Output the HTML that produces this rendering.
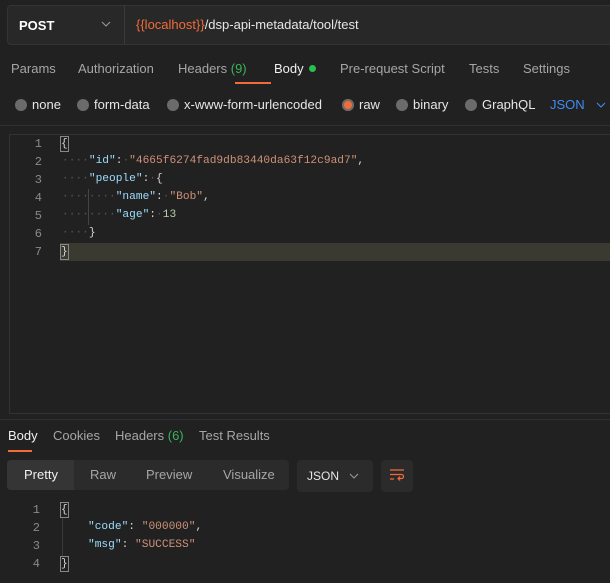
<!DOCTYPE html>
<html><head><meta charset="utf-8"><style>
*{margin:0;padding:0;box-sizing:border-box}
body{width:610px;height:583px;background:#212121;font-family:"Liberation Sans",sans-serif;position:relative;overflow:hidden;color:#a6a6a6;font-size:13px}
.a{position:absolute;white-space:nowrap}
.mono{font-family:"Liberation Mono",monospace;font-size:11.2px}
.k{color:#9cdcfe}.s{color:#ce9178}.n{color:#b5cea8}.p{color:#d4d4d4}.d{color:#555}
.ln{color:#8a8a8a;width:20px;text-align:right;font-size:12px}
.rad{width:12px;height:12px;border-radius:50%;background:#6b6b6b;display:inline-block;vertical-align:-2px;margin-right:5px}
</style></head><body>
<div class="a" style="left:7px;top:5px;width:610px;height:40px;background:#282828;border:1px solid #343434;border-radius:4px"></div>
<div class="a" style="left:124px;top:6px;width:1px;height:38px;background:#3a3a3a"></div>
<div class="a" style="left:19px;top:18px;color:#fff;font-weight:bold;font-size:13px">POST</div>
<svg class="a" style="left:101px;top:21px" width="10" height="6" viewBox="0 0 10 6" fill="none" stroke="#999" stroke-width="1.1"><path d="M1 1L5 5L9 1"/></svg>
<div class="a" style="left:136px;top:17px;color:#e6e6e6;font-size:13px"><span style="color:#f26b3a">{{localhost}}</span>/dsp-api-metadata/tool/test</div>

<div class="a" style="left:11px;top:61px">Params</div>
<div class="a" style="left:78px;top:61px">Authorization</div>
<div class="a" style="left:178px;top:61px">Headers <span style="color:#3bb35c">(9)</span></div>
<div class="a" style="left:274px;top:61px;color:#f0f0f0">Body <span style="display:inline-block;width:7px;height:7px;border-radius:50%;background:#27c24c;margin-left:2px;vertical-align:1px"></span></div>
<div class="a" style="left:235px;top:82px;width:36px;height:2px;background:#f26b3a"></div>
<div class="a" style="left:340px;top:61px">Pre-request Script</div>
<div class="a" style="left:469px;top:61px">Tests</div>
<div class="a" style="left:523px;top:61px">Settings</div>

<div class="a" style="left:15px;top:97px;color:#e6e6e6"><span class="rad"></span>none</div>
<div class="a" style="left:77px;top:97px;color:#e6e6e6"><span class="rad"></span>form-data</div>
<div class="a" style="left:167px;top:97px;color:#e6e6e6"><span class="rad"></span>x-www-form-urlencoded</div>
<div class="a" style="left:342px;top:97px;color:#e6e6e6"><span class="rad" style="background:#f26b3a;box-shadow:inset 0 0 0 2px #6b6b6b"></span>raw</div>
<div class="a" style="left:396px;top:97px;color:#e6e6e6"><span class="rad"></span>binary</div>
<div class="a" style="left:465px;top:97px;color:#e6e6e6"><span class="rad"></span>GraphQL</div>
<div class="a" style="left:550px;top:97px;color:#3f8cf5">JSON</div>
<svg class="a" style="left:596px;top:102px" width="10" height="6" viewBox="0 0 10 6" fill="none" stroke="#3f8cf5" stroke-width="1.1"><path d="M1 1L5 5L9 1"/></svg>

<div class="a" style="left:0;top:125px;width:610px;height:1px;background:#303030"></div>
<div class="a" style="left:9px;top:134px;width:610px;height:280px;border-left:1px solid #333;border-top:1px solid #333;border-bottom:1px solid #333"></div>
<div class="a" style="left:0;top:419px;width:610px;height:1px;background:#303030"></div>

<div class="a" style="left:60px;top:243px;width:550px;height:18px;background:#3a3a30"></div>
<div class="a" style="left:88px;top:189px;width:1px;height:36px;background:#444"></div>
<div class="mono">
<div class="a ln" style="left:22px;top:137px">1</div>
<div class="a ln" style="left:22px;top:155px">2</div>
<div class="a ln" style="left:22px;top:173px">3</div>
<div class="a ln" style="left:22px;top:191px">4</div>
<div class="a ln" style="left:22px;top:209px">5</div>
<div class="a ln" style="left:22px;top:227px">6</div>
<div class="a ln" style="left:22px;top:245px">7</div>
<div class="a p" style="left:61px;top:137px;outline:1px solid #888;line-height:14px">{</div>
<div class="a" style="left:62px;top:155px"><span class="d">····</span><span class="k">"id"</span><span class="p">:</span><span class="d">·</span><span class="s">"4665f6274fad9db83440da63f12c9ad7"</span><span class="p">,</span></div>
<div class="a" style="left:62px;top:173px"><span class="d">····</span><span class="k">"people"</span><span class="p">:</span><span class="d">·</span><span class="p">{</span></div>
<div class="a" style="left:62px;top:191px"><span class="d">········</span><span class="k">"name"</span><span class="p">:</span><span class="d">·</span><span class="s">"Bob"</span><span class="p">,</span></div>
<div class="a" style="left:62px;top:209px"><span class="d">········</span><span class="k">"age"</span><span class="p">:</span><span class="d">·</span><span class="n">13</span></div>
<div class="a" style="left:62px;top:227px"><span class="d">····</span><span class="p">}</span></div>
<div class="a p" style="left:61px;top:245px;outline:1px solid #888;line-height:14px">}</div>
</div>

<div class="a" style="left:8px;top:428px;color:#f0f0f0">Body</div>
<div class="a" style="left:8px;top:450px;width:24px;height:2px;background:#f26b3a"></div>
<div class="a" style="left:53px;top:428px">Cookies</div>
<div class="a" style="left:115px;top:428px">Headers <span style="color:#3bb35c">(6)</span></div>
<div class="a" style="left:199px;top:428px">Test Results</div>

<div class="a" style="left:7px;top:460px;width:282px;height:30px;background:#2b2b2b;border-radius:4px"></div>
<div class="a" style="left:7px;top:460px;width:67px;height:30px;background:#353535;border-radius:4px 0 0 4px"></div>
<div class="a" style="left:24px;top:467px;color:#f0f0f0">Pretty</div>
<div class="a" style="left:90px;top:467px">Raw</div>
<div class="a" style="left:146px;top:467px">Preview</div>
<div class="a" style="left:223px;top:467px">Visualize</div>
<div class="a" style="left:297px;top:460px;width:76px;height:32px;background:#2b2b2b;border-radius:4px"></div>
<div class="a" style="left:307px;top:469px;color:#e6e6e6;font-size:12px">JSON</div>
<svg class="a" style="left:349px;top:473px" width="10" height="6" viewBox="0 0 10 6" fill="none" stroke="#999" stroke-width="1.1"><path d="M1 1L5 5L9 1"/></svg>
<div class="a" style="left:381px;top:460px;width:32px;height:32px;background:#2b2b2b;border-radius:4px"></div>
<svg class="a" style="left:389px;top:467px" width="16" height="16" viewBox="0 0 16 16" fill="none" stroke="#f26b3a" stroke-width="1.2"><path d="M1 3H15M1 7.5H12.5a2 2 0 0 1 0 4H9M11 9.5L9 11.5L11 13.5M1 12H5"/></svg>

<div class="a" style="left:62px;top:511px;width:1px;height:54px;background:#3a3a3a"></div>
<div class="mono">
<div class="a ln" style="left:20px;top:503px">1</div>
<div class="a ln" style="left:20px;top:521px">2</div>
<div class="a ln" style="left:20px;top:539px">3</div>
<div class="a ln" style="left:20px;top:557px">4</div>
<div class="a p" style="left:61px;top:503px;outline:1px solid #888;line-height:14px;background:#212121">{</div>
<div class="a" style="left:88px;top:521px"><span class="k">"code"</span><span class="p">: </span><span class="s">"000000"</span><span class="p">,</span></div>
<div class="a" style="left:88px;top:539px"><span class="k">"msg"</span><span class="p">: </span><span class="s">"SUCCESS"</span></div>
<div class="a p" style="left:61px;top:557px;outline:1px solid #888;line-height:14px;background:#212121">}</div>
</div>
</body></html>
